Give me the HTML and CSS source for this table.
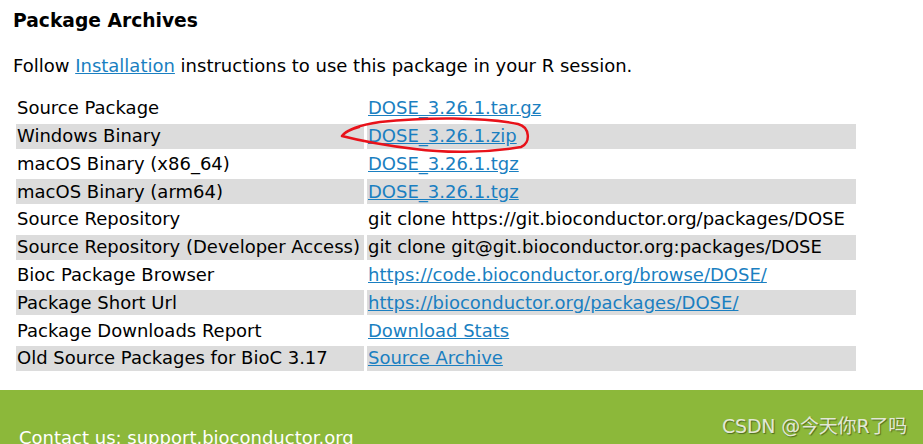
FILE: index.html
```html
<!DOCTYPE html>
<html>
<head>
<meta charset="utf-8">
<link rel="stylesheet" href="styles.css">
</head>
<body>
<main class="content">
  <h2 class="title">Package Archives</h2>
  <p class="intro">Follow <a href="#">Installation</a> instructions to use this package in your R session.</p>
  <div class="table-wrap">
  <table class="archives">
    <tr><td class="label">Source Package</td><td><a href="#">DOSE_3.26.1.tar.gz</a></td></tr>
    <tr class="alt"><td class="label">Windows Binary</td><td><a href="#">DOSE_3.26.1.zip</a></td></tr>
    <tr><td class="label">macOS Binary (x86_64)</td><td><a href="#">DOSE_3.26.1.tgz</a></td></tr>
    <tr class="alt"><td class="label">macOS Binary (arm64)</td><td><a href="#">DOSE_3.26.1.tgz</a></td></tr>
    <tr><td class="label">Source Repository</td><td>git clone https://git.bioconductor.org/packages/DOSE</td></tr>
    <tr class="alt"><td class="label">Source Repository (Developer Access)</td><td>git clone git@git.bioconductor.org:packages/DOSE</td></tr>
    <tr><td class="label">Bioc Package Browser</td><td><a href="#">https://code.bioconductor.org/browse/DOSE/</a></td></tr>
    <tr class="alt"><td class="label">Package Short Url</td><td><a href="#">https://bioconductor.org/packages/DOSE/</a></td></tr>
    <tr><td class="label">Package Downloads Report</td><td><a href="#">Download Stats</a></td></tr>
    <tr class="alt"><td class="label">Old Source Packages for BioC 3.17</td><td><a href="#">Source Archive</a></td></tr>
  </table>
  </div>
</main>
<footer class="footer">
  <div class="watermark">CSDN @今天你R了吗</div>
  <div class="contact">Contact us: support.bioconductor.org</div>
</footer>
<svg class="annot" width="200" height="42" viewBox="0 0 200 42">
  <path d="M7 21 C 12 14, 25 10, 45 7 C 90 2, 150 2, 183 9 C 195 12, 196 28, 186 32 C 150 38, 110 38, 80 34 C 55 31, 30 27, 7 21 C 10 17, 16 14, 24 12" fill="none" stroke="#e8121a" stroke-width="2.5" stroke-linecap="round" stroke-linejoin="round"/>
</svg>
</body>
</html>
```
FILE: styles.css
```css
html, body {
  margin: 0;
  padding: 0;
  background: #fff;
  overflow: hidden;
}
body {
  font-family: "DejaVu Sans", Verdana, sans-serif;
  color: #000;
  width: 923px;
  height: 444px;
  position: relative;
}
.content {
  padding: 0 0 0 13px;
  height: 390px;
}
.title {
  margin: 0;
  padding-top: 9px;
  font-size: 18.7px;
  font-weight: bold;
  line-height: 24px;
}
.intro {
  margin: 22px 0 0 0;
  font-size: 18px;
  line-height: 22px;
}
a {
  color: #1a7fc1;
  text-decoration: underline;
}
.table-wrap {
  margin-top: 16px;
}
.archives {
  border-collapse: separate;
  border-spacing: 3px 3px;
  font-size: 18px;
}
.archives td {
  padding: 0 1px;
  height: 24.78px;
  line-height: 24px;
  white-space: nowrap;
}
.archives td.label {
  width: 346px;
}
.archives td:last-child {
  width: 487px;
}
.archives tr.alt td {
  background: #dcdcdc;
}
.annot {
  position: absolute;
  left: 335px;
  top: 115px;
}
.footer {
  background: #8cb83a;
  height: 54px;
  position: relative;
}
.watermark {
  position: absolute;
  right: 16px;
  top: 21px;
  font-family: "DejaVu Sans", "Noto Sans CJK SC", sans-serif;
  font-size: 19px;
  color: #e3e8d6;
  text-shadow: 1px 1px 1px #4d6b1e;
  letter-spacing: -0.2px;
}
.contact {
  position: absolute;
  left: 19px;
  top: 37px;
  color: #fff;
  font-size: 18px;
}
```
